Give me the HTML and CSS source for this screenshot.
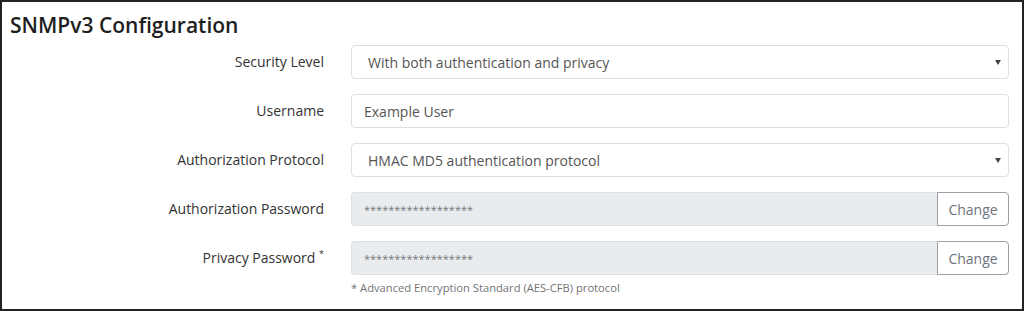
FILE: index.html
```
<!DOCTYPE html>
<html lang="en">
<head>
    <meta charset="UTF-8">
    <meta name="viewport" content="width=device-width, initial-scale=1.0">
    <title>SNMPv3 Configuration</title>
    <link rel="stylesheet" href="styles.css">
</head>
<body>
    <div class="panel">
        <h1 class="title">SNMPv3 Configuration</h1>

        <form class="form">
            <div class="row">
                <label class="label" for="secLevel">Security Level</label>
                <div class="select-wrap">
                    <select id="secLevel" class="field">
                        <option>With both authentication and privacy</option>
                    </select>
                </div>
            </div>

            <div class="row">
                <label class="label" for="user">Username</label>
                <input id="user" class="field" type="text" value="Example User">
            </div>

            <div class="row">
                <label class="label" for="authProto">Authorization Protocol</label>
                <div class="select-wrap">
                    <select id="authProto" class="field">
                        <option>HMAC MD5 authentication protocol</option>
                    </select>
                </div>
            </div>

            <div class="row">
                <label class="label" for="authPass">Authorization Password</label>
                <div class="input-group">
                    <input id="authPass" class="field locked" type="text" value="******************" disabled>
                    <button type="button" class="btn-change">Change</button>
                </div>
            </div>

            <div class="row">
                <label class="label" for="privPass">Privacy Password <sup>*</sup></label>
                <div>
                    <div class="input-group">
                        <input id="privPass" class="field locked" type="text" value="******************" disabled>
                        <button type="button" class="btn-change">Change</button>
                    </div>
                    <p class="help">* Advanced Encryption Standard (AES-CFB) protocol</p>
                </div>
            </div>
        </form>
    </div>
</body>
</html>
```

FILE: styles.css
```
* {
    box-sizing: border-box;
}

body {
    margin: 0;
    font-family: "Open Sans", "Noto Sans", sans-serif;
    font-size: 14px;
    color: #333;
    background: #fff;
}

.panel {
    width: 1024px;
    height: 311px;
    border: 2px solid #222;
    padding: 0 13px 0 8px;
}

.title {
    margin: 0;
    padding-top: 9px;
    font-size: 21px;
    line-height: 28px;
    font-weight: 600;
    color: #1e1e1e;
}

.form {
    margin-top: 6px;
}

.row {
    display: grid;
    grid-template-columns: 314px 1fr;
    column-gap: 27px;
    margin-bottom: 15px;
}

.label {
    text-align: right;
    line-height: 34px;
    color: #333;
}

.label sup {
    font-size: 9px;
    vertical-align: 6px;
    line-height: 0;
}

.field {
    display: block;
    width: 100%;
    height: 34px;
    padding: 6px 12px;
    font-family: inherit;
    font-size: 14px;
    color: #555;
    background: #fff;
    border: 1px solid #dcdfe3;
    border-radius: 4px;
    outline: none;
}

.select-wrap {
    position: relative;
}

.select-wrap select {
    appearance: none;
    -webkit-appearance: none;
    padding-left: 16px;
}

.select-wrap::after {
    content: "";
    position: absolute;
    right: 8px;
    top: 15px;
    border-left: 3px solid transparent;
    border-right: 3px solid transparent;
    border-top: 5px solid #444;
    pointer-events: none;
}

.input-group {
    display: flex;
}

.locked {
    flex: 1;
    background: #e9ecef;
    color: #777;
    border-right: 0;
    border-radius: 4px 0 0 4px;
    font-size: 11px;
}

.btn-change {
    width: 72px;
    height: 34px;
    font-family: inherit;
    font-size: 14px;
    color: #6c757d;
    background: #fff;
    border: 1px solid #9aa0a6;
    border-radius: 0 4px 4px 0;
    padding: 0;
}

.help {
    margin: 5px 0 0;
    font-size: 11.2px;
    color: #737373;
}
```
